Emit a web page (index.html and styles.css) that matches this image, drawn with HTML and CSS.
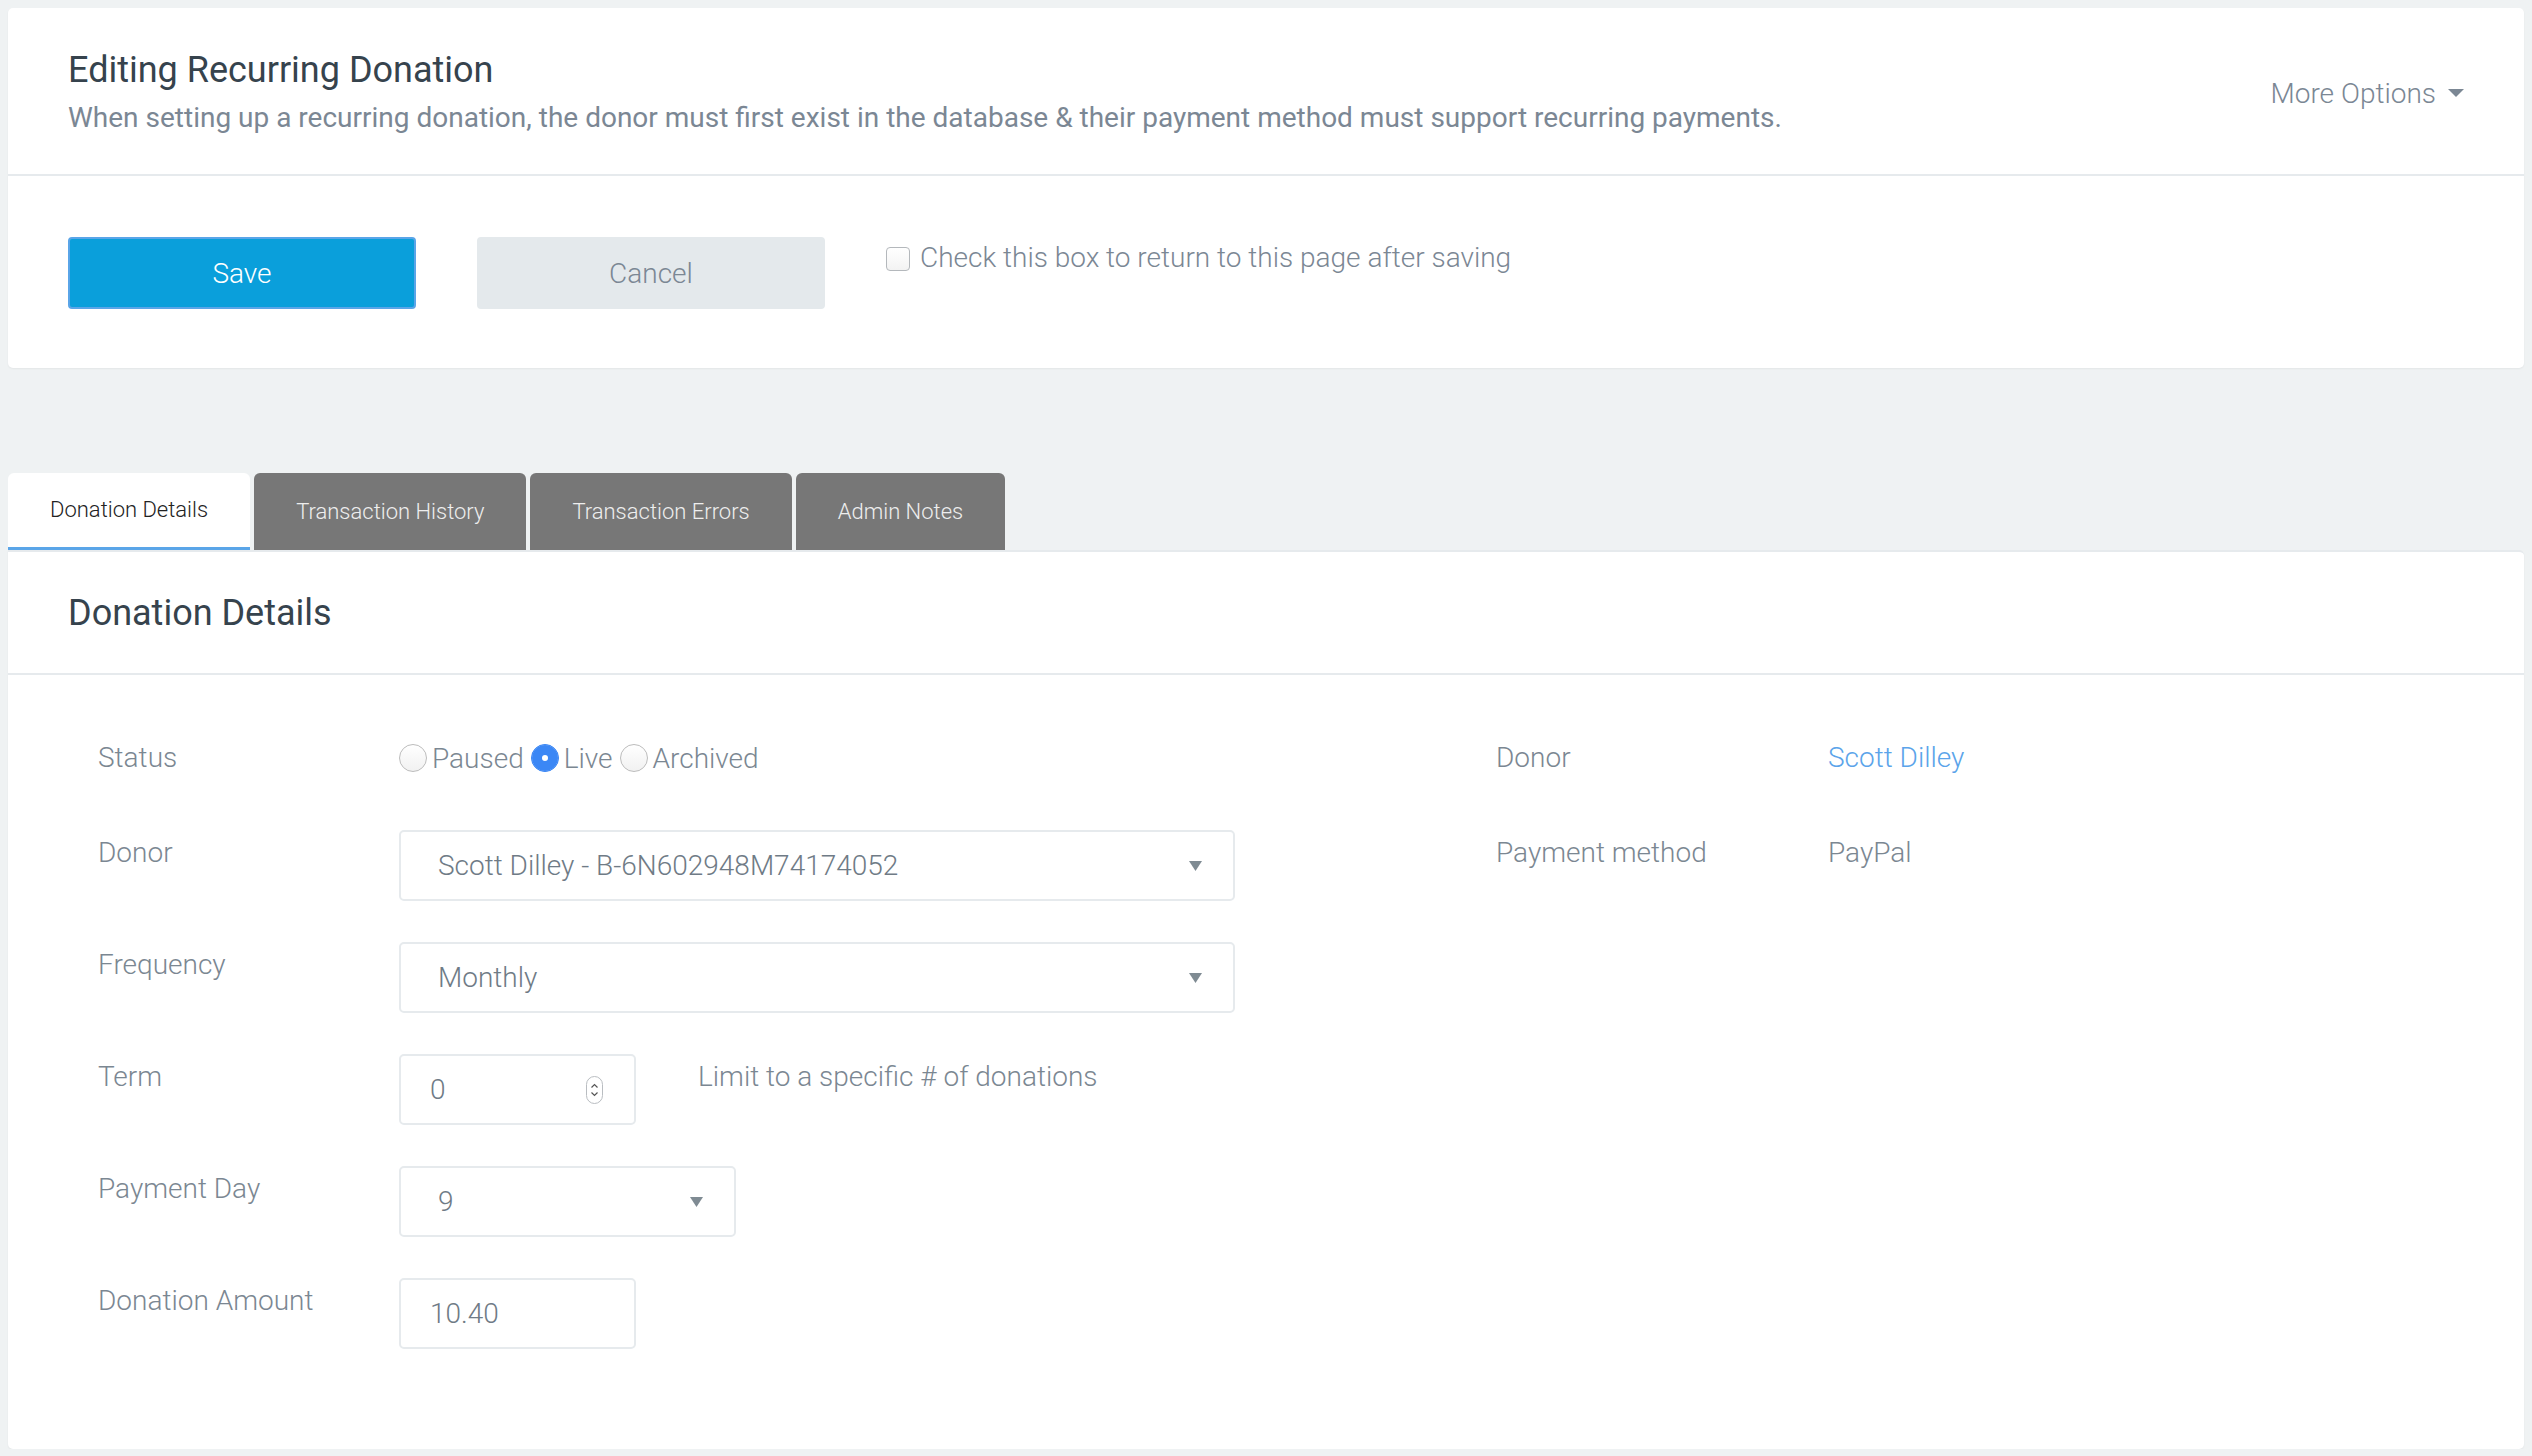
FILE: index.html
```html
<!DOCTYPE html>
<html lang="en">
<head>
    <meta charset="UTF-8">
    <meta name="viewport" content="width=device-width, initial-scale=1.0">
    <title>Editing Recurring Donation</title>
    <link rel="stylesheet" href="styles.css">
</head>
<body>
    <section class="card top-card">
        <header class="card-head">
            <div>
                <h1>Editing Recurring Donation</h1>
                <p>When setting up a recurring donation, the donor must first exist in the database &amp; their payment method must support recurring payments.</p>
            </div>
            <a class="more-options">More Options <span class="caret"></span></a>
        </header>
        <div class="actions">
            <button class="btn btn-save" type="button">Save</button>
            <button class="btn btn-cancel" type="button">Cancel</button>
            <label class="return-check"><input type="checkbox">Check this box to return to this page after saving</label>
        </div>
    </section>

    <nav class="tabs">
        <a class="tab active">Donation Details</a>
        <a class="tab">Transaction History</a>
        <a class="tab">Transaction Errors</a>
        <a class="tab">Admin Notes</a>
    </nav>

    <section class="card details-card">
        <header class="details-head">
            <h2>Donation Details</h2>
        </header>
        <div class="details-body">
            <div class="form-col">
                <div class="field">
                    <span class="field-label">Status</span>
                    <div class="radios">
                        <label class="radio"><span class="dot"></span>Paused</label>
                        <label class="radio checked"><span class="dot"></span>Live</label>
                        <label class="radio"><span class="dot"></span>Archived</label>
                    </div>
                </div>
                <div class="field">
                    <span class="field-label">Donor</span>
                    <div class="select select-wide">
                        <span>Scott Dilley - B-6N602948M74174052</span>
                        <svg width="13" height="10" viewBox="0 0 13 10"><path d="M0 0H13L6.5 10Z" fill="#7f8b93"/></svg>
                    </div>
                </div>
                <div class="field">
                    <span class="field-label">Frequency</span>
                    <div class="select select-wide">
                        <span>Monthly</span>
                        <svg width="13" height="10" viewBox="0 0 13 10"><path d="M0 0H13L6.5 10Z" fill="#7f8b93"/></svg>
                    </div>
                </div>
                <div class="field">
                    <span class="field-label">Term</span>
                    <div class="inline">
                        <div class="input">
                            <span>0</span>
                            <svg width="17" height="28" viewBox="0 0 17 28"><rect x="0.5" y="0.5" width="16" height="27" rx="8" fill="#fff" stroke="#b9bdc1"/><path d="M5.5 11.5L8.5 8.5L11.5 11.5" fill="none" stroke="#555" stroke-width="1.2"/><path d="M5.5 16.5L8.5 19.5L11.5 16.5" fill="none" stroke="#555" stroke-width="1.2"/></svg>
                        </div>
                        <span class="help">Limit to a specific # of donations</span>
                    </div>
                </div>
                <div class="field">
                    <span class="field-label">Payment Day</span>
                    <div class="select select-day">
                        <span>9</span>
                        <svg width="13" height="10" viewBox="0 0 13 10"><path d="M0 0H13L6.5 10Z" fill="#7f8b93"/></svg>
                    </div>
                </div>
                <div class="field">
                    <span class="field-label">Donation Amount</span>
                    <div class="input">
                        <span>10.40</span>
                    </div>
                </div>
            </div>
            <div class="info-col">
                <div class="info-row">
                    <span>Donor</span>
                    <a class="link">Scott Dilley</a>
                </div>
                <div class="info-row">
                    <span>Payment method</span>
                    <span>PayPal</span>
                </div>
            </div>
        </div>
    </section>
</body>
</html>
```

FILE: styles.css
```css
* {
    box-sizing: border-box;
}

body {
    margin: 0;
    padding: 8px 8px 0;
    background: #eff2f3;
    font-family: 'Roboto', 'Noto Sans', sans-serif;
    color: #7b8792;
}

.card {
    background: #fff;
    border-radius: 5px;
    box-shadow: 0 1px 2px rgba(0, 0, 0, 0.05);
}

/* page header */
.card-head {
    display: flex;
    justify-content: space-between;
    align-items: center;
    padding: 42px 60px 38px;
    border-bottom: 2px solid #e6eaed;
}

.card-head h1 {
    margin: 0;
    font-size: 36px;
    line-height: 40px;
    font-weight: 400;
    color: #36434d;
}

.card-head p {
    margin: 10px 0 0;
    font-size: 28px;
    line-height: 36px;
    color: #7b8794;
}

.more-options {
    display: flex;
    align-items: center;
    gap: 12px;
    font-size: 28px;
    font-weight: 300;
    color: #7b8794;
}

.caret {
    width: 0;
    height: 0;
    border-left: 8px solid transparent;
    border-right: 8px solid transparent;
    border-top: 8px solid #7b8794;
}

.actions {
    display: flex;
    align-items: flex-start;
    padding: 61px 60px 59px;
}

.btn {
    width: 348px;
    height: 72px;
    margin-right: 61px;
    border-radius: 4px;
    font-family: 'Roboto', sans-serif;
    font-size: 28px;
    font-weight: 300;
}

.btn-save {
    background: #0a9fdb;
    border: 2px solid #5aa5e8;
    color: #fff;
}

.btn-cancel {
    background: #e4e9ec;
    border: 2px solid #e4e9ec;
    color: #7b8794;
}

.return-check {
    display: flex;
    align-items: flex-start;
    margin-top: 3px;
    font-size: 28px;
    font-weight: 300;
    line-height: 36px;
    color: #7b8794;
}

.return-check input {
    appearance: none;
    width: 24px;
    height: 24px;
    margin: 7px 10px 0 0;
    border: 1px solid #b4b8bc;
    border-radius: 4px;
    background: linear-gradient(#fff, #f3f3f3);
}

/* tabs */
.tabs {
    display: flex;
    gap: 4px;
    margin-top: 105px;
}

.tab {
    height: 77px;
    padding: 0 42px;
    line-height: 77px;
    font-size: 22px;
    font-weight: 300;
    background: #777;
    color: #eee;
    border-radius: 6px 6px 0 0;
}

.tab.active {
    background: #fff;
    color: #222;
    line-height: 74px;
    border-bottom: 3px solid #5aa5e8;
}

/* details */
.details-card {
    border-top: 2px solid #e6eaed;
    border-radius: 0 5px 5px 5px;
}

.details-head {
    padding: 41px 60px 40px;
    border-bottom: 2px solid #e6eaed;
}

.details-head h2 {
    margin: 0;
    font-size: 36px;
    line-height: 40px;
    font-weight: 400;
    color: #36434d;
}

.details-body {
    display: grid;
    grid-template-columns: 1398px 1fr;
    padding: 60px 90px 59px;
    font-size: 28px;
    font-weight: 300;
}

.field {
    display: grid;
    grid-template-columns: 301px auto;
    align-items: start;
    min-height: 54px;
    margin-bottom: 41px;
}

.field-label {
    padding-top: 3px;
    line-height: 40px;
    color: #7b8792;
}

.radios {
    display: flex;
    align-items: center;
    height: 40px;
    margin-top: 3px;
}

.radio {
    display: flex;
    align-items: center;
    margin-right: 7px;
    color: #7b8792;
}

.radio .dot {
    width: 28px;
    height: 28px;
    margin-right: 5px;
    border: 1px solid #bcbcbc;
    border-radius: 50%;
    background: linear-gradient(#fff, #f1f1f1);
}

.radio.checked .dot {
    border-color: #3b87f5;
    background: #3b87f5;
    box-shadow: inset 0 0 0 10px #3b87f5, inset 0 0 0 14px #fff;
}

.select,
.input {
    display: flex;
    align-items: center;
    justify-content: space-between;
    height: 71px;
    border: 2px solid #e6eaed;
    border-radius: 5px;
    color: #6f7b86;
}

.select {
    padding: 0 31px 0 37px;
}

.select-wide {
    width: 836px;
}

.select-day {
    width: 337px;
}

.input {
    width: 237px;
    padding: 0 31px 0 29px;
}

.inline {
    display: flex;
    align-items: flex-start;
}

.help {
    margin-left: 62px;
    padding-top: 3px;
    line-height: 40px;
    color: #7b8792;
}

.info-row {
    display: grid;
    grid-template-columns: 332px auto;
    min-height: 54px;
    margin-bottom: 41px;
    padding-top: 3px;
    line-height: 40px;
}

.link {
    color: #5ba4ea;
}
```
